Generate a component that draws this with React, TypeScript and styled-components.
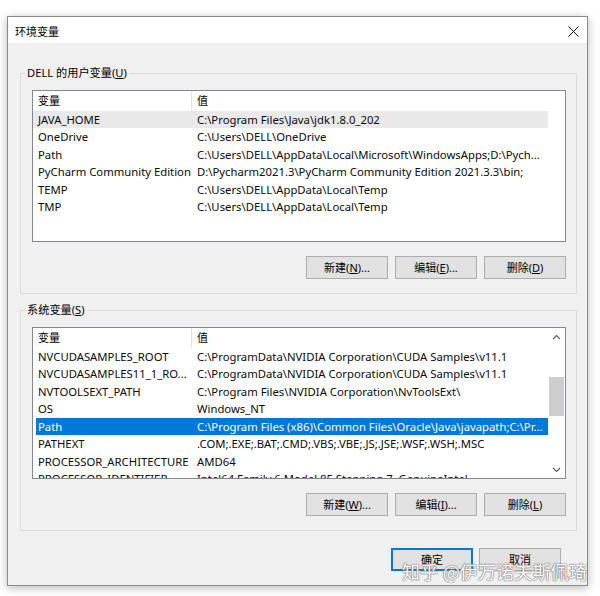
import React from "react";
import styled, { createGlobalStyle, css } from "styled-components";

const Global = createGlobalStyle`
  html, body { margin: 0; padding: 0; background: #ffffff; }
  body {
    font-family: "Noto Sans", "Noto Sans CJK SC", sans-serif;
    font-size: 11px;
    color: #000;
  }
  * { box-sizing: border-box; }
`;

const Page = styled.div`
  position: relative;
  width: 600px;
  height: 596px;
  padding: 16px 0 0 7px;
`;

const Dialog = styled.div`
  width: 581px;
  height: 570px;
  border: 1px solid #8a8a8a;
  background: #f0f0f0;
  box-shadow: 0 2px 9px rgba(0, 0, 0, 0.28);
  display: flex;
  flex-direction: column;
`;

const TitleBar = styled.div`
  height: 26px;
  flex: none;
  background: #ffffff;
  display: flex;
  align-items: center;
  justify-content: space-between;
  padding: 0 8px 0 7px;
`;

const Title = styled.span`
  font-family: "Noto Sans CJK SC", sans-serif;
  font-size: 11px;
  line-height: 14px;
  margin-top: 2px;
`;

const CloseIcon = styled.svg`
  width: 11px;
  height: 11px;
  margin-top: 2px;
`;

const Body = styled.div`
  flex: 1;
  display: flex;
  flex-direction: column;
  padding: 23px 10px 14px 12px;
`;

const Group = styled.fieldset<{ $gap?: number }>`
  margin: ${(p) => p.$gap ?? 0}px 0 0 0;
  min-width: 0;
  border: 1px solid #dcdcdc;
  padding: 10px 10px 14px 11px;
  display: flex;
  flex-direction: column;
`;

const Legend = styled.legend`
  margin-left: -7px;
  padding: 0 2px;
  font-size: 11.2px;
  line-height: 14px;
`;

const ListBox = styled.div`
  height: 152px;
  border: 1px solid #828790;
  background: #ffffff;
  display: flex;
  overflow: hidden;
`;

const TableArea = styled.div`
  width: 515px;
  flex: none;
  overflow: hidden;
`;

const HeaderRow = styled.div`
  height: 19.5px;
  display: flex;
  align-items: center;
`;

const HeaderCell = styled.div<{ $w: number; $divider?: boolean }>`
  width: ${(p) => p.$w}px;
  flex: none;
  height: 100%;
  padding-left: 5px;
  line-height: 19.5px;
  font-size: 11px;
  ${(p) =>
    p.$divider &&
    css`
      border-right: 1px solid #e5e5e5;
    `}
`;

const Row = styled.div<{ $sel?: "focus" | "idle" }>`
  height: 17.5px;
  display: flex;
  align-items: center;
  font-size: 11.3px;
  color: #0a0a0a;
  ${(p) =>
    p.$sel === "idle" &&
    css`
      background: #e9e9e9;
    `}
  ${(p) =>
    p.$sel === "focus" &&
    css`
      background: linear-gradient(to right, transparent 3px, #0078d7 3px);
      color: #ffffff;
    `}
`;

const Cell = styled.div<{ $w: number }>`
  width: ${(p) => p.$w}px;
  flex: none;
  padding: 0 0 0 5px;
  white-space: nowrap;
  overflow: hidden;
  line-height: 17.5px;
`;

const ScrollBar = styled.div`
  width: 17px;
  flex: none;
  display: flex;
  flex-direction: column;
  background: #ffffff;
`;

const Arrow = styled.div`
  height: 17px;
  flex: none;
  display: flex;
  align-items: center;
  justify-content: center;
`;

const Track = styled.div`
  flex: 1;
  padding: 0 1px;
`;

const Thumb = styled.div`
  height: 39px;
  background: #cdcdcd;
`;

const ButtonRow = styled.div<{ $top: number; $gap: number }>`
  display: flex;
  justify-content: flex-end;
  gap: ${(p) => p.$gap}px;
  margin-top: ${(p) => p.$top}px;
`;

const Button = styled.button<{ $default?: boolean }>`
  width: 82px;
  height: 23px;
  padding: 0;
  font-family: "Noto Sans", "Noto Sans CJK SC", sans-serif;
  font-size: 11px;
  line-height: 14px;
  color: #000;
  background: #e1e1e1;
  border: 1px solid #adadad;
  ${(p) =>
    p.$default &&
    css`
      border: 2px solid #0078d7;
    `}
  u { text-underline-offset: 1px; }
`;

const Footer = styled.div`
  display: flex;
  justify-content: flex-end;
  gap: 6px;
  margin-top: 17px;
  padding-right: 16px;
`;

const Watermark = styled.div`
  position: absolute;
  left: 402px;
  top: 560px;
  font-family: "Noto Sans CJK SC", sans-serif;
  font-size: 18px;
  line-height: 22px;
  color: #ffffff;
  letter-spacing: 0.2px;
  text-shadow: 0 0 1px #6b6b6b, 0 0 1px #6b6b6b, 0 0 2px #9a9a9a;
  white-space: nowrap;
`;

type RowData = [string, string, ("focus" | "idle")?];

const userVars: RowData[] = [
  ["JAVA_HOME", "C:\\Program Files\\Java\\jdk1.8.0_202", "idle"],
  ["OneDrive", "C:\\Users\\DELL\\OneDrive"],
  ["Path", "C:\\Users\\DELL\\AppData\\Local\\Microsoft\\WindowsApps;D:\\Pych..."],
  ["PyCharm Community Edition", "D:\\Pycharm2021.3\\PyCharm Community Edition 2021.3.3\\bin;"],
  ["TEMP", "C:\\Users\\DELL\\AppData\\Local\\Temp"],
  ["TMP", "C:\\Users\\DELL\\AppData\\Local\\Temp"],
];

const sysVars: RowData[] = [
  ["NVCUDASAMPLES_ROOT", "C:\\ProgramData\\NVIDIA Corporation\\CUDA Samples\\v11.1"],
  ["NVCUDASAMPLES11_1_RO...", "C:\\ProgramData\\NVIDIA Corporation\\CUDA Samples\\v11.1"],
  ["NVTOOLSEXT_PATH", "C:\\Program Files\\NVIDIA Corporation\\NvToolsExt\\"],
  ["OS", "Windows_NT"],
  ["Path", "C:\\Program Files (x86)\\Common Files\\Oracle\\Java\\javapath;C:\\Pr...", "focus"],
  ["PATHEXT", ".COM;.EXE;.BAT;.CMD;.VBS;.VBE;.JS;.JSE;.WSF;.WSH;.MSC"],
  ["PROCESSOR_ARCHITECTURE", "AMD64"],
  ["PROCESSOR_IDENTIFIER", "Intel64 Family 6 Model 85 Stepping 7, GenuineIntel"],
];

const Chevron = ({ up }: { up?: boolean }) => (
  <svg width="9" height="6" viewBox="0 0 9 6">
    <path
      d={up ? "M1 5 L4.5 1.5 L8 5" : "M1 1 L4.5 4.5 L8 1"}
      fill="none"
      stroke="#606060"
      strokeWidth="1.2"
    />
  </svg>
);

const VarList = ({ rows, scroll }: { rows: RowData[]; scroll?: number }) => (
  <ListBox>
    <TableArea>
      <HeaderRow>
        <HeaderCell $w={159} $divider>
          变量
        </HeaderCell>
        <HeaderCell $w={356}>值</HeaderCell>
      </HeaderRow>
      {rows.map(([name, value, sel]) => (
        <Row key={name + value} $sel={sel}>
          <Cell $w={159}>{name}</Cell>
          <Cell $w={356}>{value}</Cell>
        </Row>
      ))}
    </TableArea>
    {scroll !== undefined && (
      <ScrollBar>
        <Arrow>
          <Chevron up />
        </Arrow>
        <Track>
          <Thumb style={{ marginTop: scroll }} />
        </Track>
        <Arrow>
          <Chevron />
        </Arrow>
      </ScrollBar>
    )}
  </ListBox>
);

export default function App() {
  return (
    <>
      <Global />
      <Page>
        <Dialog>
          <TitleBar>
            <Title>环境变量</Title>
            <CloseIcon viewBox="0 0 11 11">
              <path d="M0.5 0.5 L10.5 10.5 M10.5 0.5 L0.5 10.5" stroke="#111" strokeWidth="1" />
            </CloseIcon>
          </TitleBar>
          <Body>
            <Group>
              <Legend>
                DELL 的用户变量(<u>U</u>)
              </Legend>
              <VarList rows={userVars} />
              <ButtonRow $top={14} $gap={7}>
                <Button>
                  新建(<u>N</u>)...
                </Button>
                <Button>
                  编辑(<u>E</u>)...
                </Button>
                <Button>
                  删除(<u>D</u>)
                </Button>
              </ButtonRow>
            </Group>
            <Group $gap={9}>
              <Legend>
                系统变量(<u>S</u>)
              </Legend>
              <VarList rows={sysVars} scroll={32} />
              <ButtonRow $top={14} $gap={7}>
                <Button>
                  新建(<u>W</u>)...
                </Button>
                <Button>
                  编辑(<u>I</u>)...
                </Button>
                <Button>
                  删除(<u>L</u>)
                </Button>
              </ButtonRow>
            </Group>
            <Footer>
              <Button $default>确定</Button>
              <Button>取消</Button>
            </Footer>
          </Body>
        </Dialog>
        <Watermark>知乎 @伊万诺夫斯佩琦</Watermark>
      </Page>
    </>
  );
}
